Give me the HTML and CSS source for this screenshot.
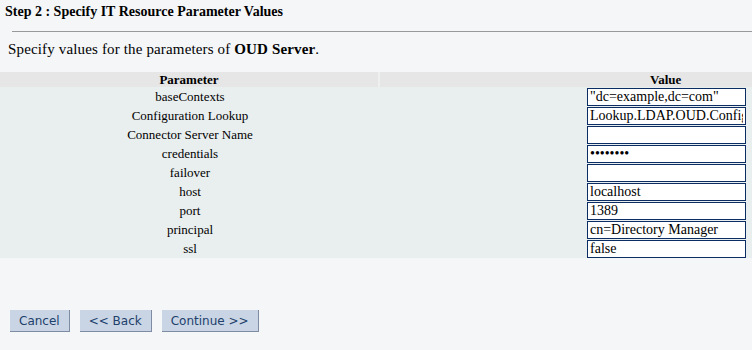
FILE: index.html
```html
<!DOCTYPE html>
<html lang="en">
<head>
    <meta charset="UTF-8">
    <title>Step 2 : Specify IT Resource Parameter Values</title>
    <link rel="stylesheet" href="styles.css">
</head>
<body>
    <h1 class="step-title">Step 2 : Specify IT Resource Parameter Values</h1>
    <hr class="step-rule">
    <p class="intro">Specify values for the parameters of <b>OUD Server</b>.</p>

    <table class="params">
        <thead>
            <tr>
                <th class="col-name">Parameter</th>
                <th class="col-gap"></th>
                <th class="col-value">Value</th>
            </tr>
        </thead>
        <tbody>
            <tr><td>baseContexts</td><td></td><td><input class="field" type="text" value="&quot;dc=example,dc=com&quot;"></td></tr>
            <tr><td>Configuration Lookup</td><td></td><td><input class="field" type="text" value="Lookup.LDAP.OUD.Configuration"></td></tr>
            <tr><td>Connector Server Name</td><td></td><td><input class="field" type="text" value=""></td></tr>
            <tr><td>credentials</td><td></td><td><input class="field" type="password" value="password"></td></tr>
            <tr><td>failover</td><td></td><td><input class="field" type="text" value=""></td></tr>
            <tr><td>host</td><td></td><td><input class="field" type="text" value="localhost"></td></tr>
            <tr><td>port</td><td></td><td><input class="field" type="text" value="1389"></td></tr>
            <tr><td>principal</td><td></td><td><input class="field" type="text" value="cn=Directory Manager"></td></tr>
            <tr><td>ssl</td><td></td><td><input class="field" type="text" value="false"></td></tr>
        </tbody>
    </table>

    <div class="actions">
        <button class="btn">Cancel</button>
        <button class="btn">&lt;&lt; Back</button>
        <button class="btn">Continue &gt;&gt;</button>
    </div>
</body>
</html>
```

FILE: styles.css
```css
body {
    margin: 0;
    background-color: #f4f6f8;
    font-family: 'Liberation Serif', 'Times New Roman', serif;
    font-size: 13px;
    color: #000;
}
.step-title {
    font-size: 14px;
    font-weight: bold;
    margin: 0;
    padding: 3px 0 0 5px;
    height: 17px;
    line-height: 17px;
}
.step-rule {
    border: none;
    border-top: 1px solid #999;
    margin: 11px 0 0 12px;
    height: 0;
}
.intro {
    font-size: 15px;
    margin: 9px 0 0 8px;
    line-height: 16px;
    letter-spacing: 0.15px;
}
.params {
    margin-top: 15px;
    width: 100%;
    border-collapse: separate;
    border-spacing: 0;
}
.params th {
    background-color: #e6e6e6;
    font-weight: bold;
    height: 15px;
    padding: 1px 0 0;
    line-height: 14px;
    box-sizing: border-box;
}
.params th.col-name {
    width: 380px;
    border-right: 2px solid #eef0f0;
}
.params th.col-value {
    width: 164px;
    text-align: left;
    padding-left: 62px;
}
.params td {
    background-color: #e9eeef;
    text-align: center;
    height: 19px;
    padding: 1px 0 0;
    vertical-align: top;
    line-height: 18px;
    box-sizing: border-box;
}
.params td:last-child {
    text-align: left;
}
.field {
    display: block;
    width: 159px;
    height: 18px;
    box-sizing: border-box;
    margin: 0 0 0 -1px;
    padding: 0 2px;
    border: 1px solid #0c2d63;
    background-color: #fff;
    font-family: 'Liberation Serif', 'Times New Roman', serif;
    font-size: 14px;
    color: #000;
    outline: none;
}
.actions {
    display: flex;
    gap: 10px;
    margin: 52px 0 0 10px;
}
.btn {
    height: 22px;
    padding: 0 9px;
    background-color: #c9d5e5;
    border: none;
    border-right: 1px solid #7d8ca3;
    border-bottom: 1px solid #7d8ca3;
    font-family: 'DejaVu Sans', Verdana, sans-serif;
    font-size: 12px;
    color: #21406b;
    cursor: pointer;
}
```
